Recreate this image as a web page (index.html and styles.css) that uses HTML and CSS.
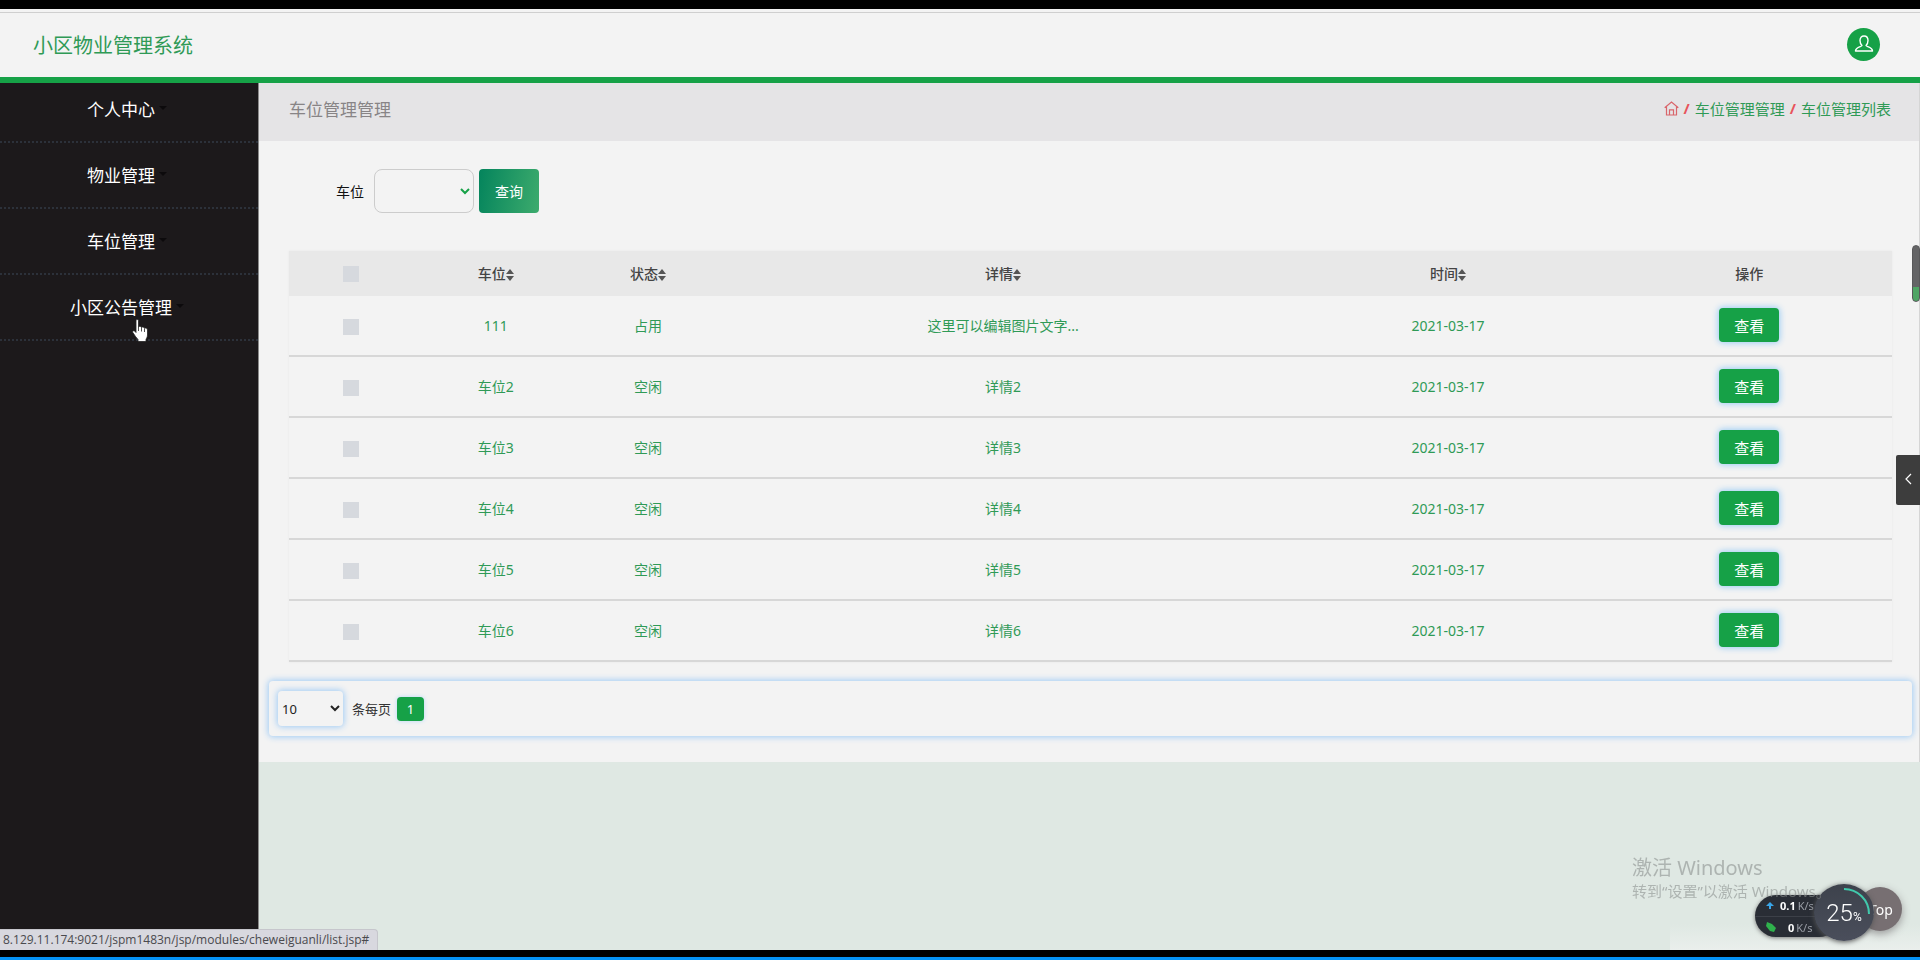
FILE: index.html
```html
<!DOCTYPE html>
<html lang="zh-CN">

<head>
    <meta charset="UTF-8" />
    <meta name="viewport" content="width=device-width, initial-scale=1.0" />
    <title>小区物业管理系统</title>
    <link rel="stylesheet" href="styles.css">
</head>

<body>
    <header class="header">
        <a class="brand" href="#">小区物业管理系统</a>
        <button class="avatar" aria-label="个人中心">
            <svg width="20" height="20" viewBox="0 0 20 20" fill="none" stroke="#fff" stroke-width="1.4" stroke-linejoin="round">
                <path d="M8 11.5C6.600 10.200 6 8.500 6 6.500C6 3.500 7.500 2 10 2C12.500 2 14 3.500 14 6.500C14 8.500 13.400 10.200 12 11.500C12 12.600 18.500 13 18.500 17H1.500C1.500 13 8 12.600 8 11.500Z" />
            </svg>
        </button>
    </header>

    <div class="wrapper">
        <nav class="sidebar">
            <a class="menu-item" href="#">个人中心<span class="caret"></span></a>
            <a class="menu-item" href="#">物业管理<span class="caret"></span></a>
            <a class="menu-item" href="#">车位管理<span class="caret"></span></a>
            <a class="menu-item" href="#">小区公告管理<span class="caret"></span></a>
        </nav>

        <main class="content">
            <div class="breadcrumb-bar">
                <h1 class="page-title">车位管理管理</h1>
                <div class="breadcrumb">
                    <a class="home" href="#" aria-label="首页">
                        <svg width="15" height="15" viewBox="0 0 15 15" fill="none" stroke="#d9656b" stroke-width="1.2">
                            <path d="M.7 6.800L7.500 1L14.300 6.800M2.500 5.500V14H12.500V5.500M5.500 14V8.800H9.500V14" />
                        </svg>
                    </a>
                    <span class="slash">/</span>
                    <a href="#">车位管理管理</a>
                    <span class="slash">/</span>
                    <a href="#">车位管理列表</a>
                </div>
            </div>

            <form class="search">
                <label for="chewei">车位</label>
                <select class="search-select" id="chewei">
                    <option></option>
                </select>
                <button class="search-button" type="button">查询</button>
            </form>

            <table class="list">
                <colgroup>
                    <col class="col-check">
                    <col class="col-name">
                    <col class="col-status">
                    <col class="col-detail">
                    <col class="col-date">
                    <col class="col-action">
                </colgroup>
                <thead>
                    <tr>
                        <th><input class="check" type="checkbox" aria-label="全选"></th>
                        <th>车位<span class="sort"></span></th>
                        <th>状态<span class="sort"></span></th>
                        <th>详情<span class="sort"></span></th>
                        <th>时间<span class="sort"></span></th>
                        <th>操作</th>
                    </tr>
                </thead>
                <tbody>
                    <tr>
                        <td><input class="check" type="checkbox" aria-label="111"></td>
                        <td>111</td>
                        <td>占用</td>
                        <td>这里可以编辑图片文字...</td>
                        <td>2021-03-17</td>
                        <td><button class="view">查看</button></td>
                    </tr>
                    <tr>
                        <td><input class="check" type="checkbox" aria-label="车位2"></td>
                        <td>车位2</td>
                        <td>空闲</td>
                        <td>详情2</td>
                        <td>2021-03-17</td>
                        <td><button class="view">查看</button></td>
                    </tr>
                    <tr>
                        <td><input class="check" type="checkbox" aria-label="车位3"></td>
                        <td>车位3</td>
                        <td>空闲</td>
                        <td>详情3</td>
                        <td>2021-03-17</td>
                        <td><button class="view">查看</button></td>
                    </tr>
                    <tr>
                        <td><input class="check" type="checkbox" aria-label="车位4"></td>
                        <td>车位4</td>
                        <td>空闲</td>
                        <td>详情4</td>
                        <td>2021-03-17</td>
                        <td><button class="view">查看</button></td>
                    </tr>
                    <tr>
                        <td><input class="check" type="checkbox" aria-label="车位5"></td>
                        <td>车位5</td>
                        <td>空闲</td>
                        <td>详情5</td>
                        <td>2021-03-17</td>
                        <td><button class="view">查看</button></td>
                    </tr>
                    <tr>
                        <td><input class="check" type="checkbox" aria-label="车位6"></td>
                        <td>车位6</td>
                        <td>空闲</td>
                        <td>详情6</td>
                        <td>2021-03-17</td>
                        <td><button class="view">查看</button></td>
                    </tr>
                </tbody>
            </table>

            <div class="pager">
                <select class="page-size" id="page-size">
                    <option>10</option>
                </select>
                <label for="page-size">条每页</label>
                <button class="page-number">1</button>
            </div>
        </main>
    </div>

    <!-- things floating over the page -->
    <svg class="cursor" width="18" height="24" viewBox="0 0 18 24">
        <path d="M4 1.500C4 .3 6.500 .3 6.500 1.500V8C7 7 9.200 7.200 9.500 8.500C10.200 7.600 12.200 8 12.500 9.300C13.500 8.600 15.500 9.200 15.500 11V16C15.500 18 14.500 19 14 20.500V22.500H6V20.500C4 18.500 2.500 16 .8 13.500C0 12 1.800 11 3 12.200L4 13.500Z" fill="#fff" stroke="#222" stroke-width=".8" />
        <path d="M6.500 8V12M9.500 8.500V12.500M12.500 9.500V13" stroke="#222" stroke-width=".8" />
    </svg>

    <div class="scroll-thumb"></div>
    <button class="drawer" aria-label="展开">
        <svg width="8" height="12" viewBox="0 0 8 12" fill="none" stroke="#fff" stroke-width="1.2">
            <path d="M7 1L2 6L7 11" />
        </svg>
    </button>

    <div class="floor"></div>

    <button class="to-top">Top</button>
    <div class="speed">
        <div class="speed-row">
            <svg width="8" height="8" viewBox="0 0 8 8"><path d="M4 0L8 4H5V7H3V4H0Z" fill="#39a5e8" /></svg>
            <b>0.1</b><span>K/s</span>
        </div>
        <div class="speed-row">
            <svg width="10" height="10" viewBox="0 0 10 10"><path d="M1 0L6 2L10 6L8 10L4 9L0 4Z" fill="#2fb14c" /></svg>
            <b>0</b><span>K/s</span>
        </div>
    </div>
    <div class="usage">
        <svg class="usage-ring" width="60" height="58" viewBox="0 0 60 58" fill="none">
            <path d="M30 5A25 25 0 0 1 55 30" stroke="#41c9ac" stroke-width="2" />
        </svg>
        <span class="usage-value">25</span><span>%</span>
    </div>

    <div class="watermark">
        <div class="watermark-title">激活 Windows</div>
        <div>转到“设置”以激活 Windows。</div>
    </div>

    <div class="status-url">8.129.11.174:9021/jspm1483n/jsp/modules/cheweiguanli/list.jsp#</div>
    <div class="taskbar"></div>
</body>

</html>
```
FILE: styles.css
```css
* {
    box-sizing: border-box;
}

body {
    margin: 0;
    min-height: 100vh;
    display: flex;
    flex-direction: column;
    border-top: 9px solid #000;
    background-color: #dfe8e3;
    font-family: "Noto Sans", "Noto Sans CJK SC", sans-serif;
    font-size: 14px;
    color: #333;
}

a {
    text-decoration: none;
}

button,
select {
    font-family: inherit;
    cursor: pointer;
}

.header {
    height: 74px;
    display: flex;
    justify-content: space-between;
    align-items: center;
    padding: 2px 40px 0 33px;
    background: linear-gradient(#f3f3f3 3px, #cfcfcf 3px, #cfcfcf 4px, #f3f3f3 4px);
    border-bottom: 6px solid #16a147;
}

.brand {
    font-size: 20px;
    color: #2f9a56;
}

.avatar {
    width: 33px;
    height: 33px;
    display: flex;
    justify-content: center;
    align-items: center;
    padding: 0;
    border: 0;
    border-radius: 50%;
    background-color: #16a147;
}

.wrapper {
    flex: 1;
    display: flex;
    align-items: stretch;
}

.sidebar {
    width: 259px;
    flex-shrink: 0;
    background-color: #1c191b;
    border-right: 1px solid #8a8a8a;
}

.menu-item {
    height: 66px;
    display: flex;
    justify-content: center;
    align-items: center;
    gap: 4px;
    padding: 0 4px 2px 0;
    border-bottom: 2px dotted #2c313a;
    font-size: 17px;
    color: #fff;
}

.menu-item:first-child {
    height: 60px;
    padding-bottom: 8px;
}

.caret {
    border: 4px solid transparent;
    border-top-color: #0c0a0c;
    border-bottom: 0;
}

.content {
    flex: 1;
    align-self: flex-start;
    padding-bottom: 26px;
    background-color: #f3f3f3;
    border-right: 1px solid #d5d5d5;
}

.breadcrumb-bar {
    height: 58px;
    display: flex;
    justify-content: space-between;
    align-items: center;
    padding: 0 28px 8px 30px;
    background-color: #e5e4e6;
}

.page-title {
    margin: 0;
    font-size: 17px;
    font-weight: normal;
    color: #888486;
}

.breadcrumb {
    display: flex;
    align-items: center;
    gap: 5px;
    font-size: 15px;
}

.breadcrumb a {
    color: #2f9a56;
}

.home {
    display: flex;
}

.slash {
    font-weight: bold;
    color: #e8535c;
}

.search {
    display: flex;
    align-items: center;
    padding: 28px 0 38px 77px;
    color: #111;
}

.search-select {
    width: 100px;
    height: 44px;
    margin: 0 5px 0 10px;
    padding: 0 4px;
    border: 1px solid #ccc;
    border-radius: 8px;
    background-color: #f3f3f3;
    color: #16a147;
}

.search-button {
    width: 60px;
    height: 44px;
    border: 0;
    border-radius: 4px;
    background: linear-gradient(100deg, #04845c, #3dab6d);
    color: #fff;
    font-size: 14px;
}

.list {
    width: calc(100% - 57px);
    margin-left: 30px;
    table-layout: fixed;
    border-collapse: separate;
    border-spacing: 0;
    text-align: center;
    box-shadow: 0 0 2px #e6e6e6;
}

.col-check {
    width: 7.7%;
}

.col-name {
    width: 10.4%;
}

.col-status {
    width: 8.6%;
}

.col-detail {
    width: 35.7%;
}

.col-date {
    width: 19.8%;
}

.col-action {
    width: 17.8%;
}

.list th {
    height: 45px;
    padding: 0 0 2px;
    background-color: #e8e8e8;
    font-weight: 500;
    color: #444;
}

.list td {
    height: 61px;
    padding: 0 0 1px;
    border-bottom: 2px solid #d7d7d7;
    color: #2f9a56;
}

.check {
    appearance: none;
    width: 16px;
    height: 16px;
    margin: 0;
    background-color: #d6d9de;
    vertical-align: middle;
}

.sort {
    display: inline-flex;
    flex-direction: column;
    gap: 2px;
    vertical-align: middle;
}

.sort::before,
.sort::after {
    content: "";
    border: 4px solid transparent;
}

.sort::before {
    border-top: 0;
    border-bottom: 5px solid #555;
}

.sort::after {
    border-bottom: 0;
    border-top: 5px solid #555;
}

.view {
    width: 60px;
    height: 34px;
    border: 0;
    border-radius: 4px;
    background-color: #16a147;
    box-shadow: 0 0 6px 1px #9ccdf5;
    color: #fff;
    font-size: 15px;
    vertical-align: middle;
}

.pager {
    height: 55px;
    display: flex;
    align-items: center;
    margin: 19px 7px 0 10px;
    padding: 0 9px;
    border-radius: 4px;
    box-shadow: 0 0 6px 1px #9fcbf5;
    font-size: 13px;
}

.page-size {
    width: 65px;
    height: 35px;
    margin-right: 9px;
    border: 0;
    border-radius: 4px;
    background-color: #f3f3f3;
    box-shadow: 0 0 6px 1px #9fcbf5;
    color: #222;
    font-size: 13px;
}

.page-number {
    width: 27px;
    height: 24px;
    margin-left: 6px;
    padding: 0;
    border: 0;
    border-radius: 4px;
    background-color: #16a147;
    box-shadow: 0 0 4px #b5d7f8;
    color: #fff;
    font-size: 13px;
}

.cursor {
    position: absolute;
    left: 132px;
    top: 319px;
}

.scroll-thumb {
    position: fixed;
    right: 0;
    top: 245px;
    width: 8px;
    height: 57px;
    border: 1px solid #58585a;
    border-radius: 4px;
    background: linear-gradient(#646466 41px, #4fa565 41px);
}

.drawer {
    position: fixed;
    right: 0;
    top: 455px;
    width: 24px;
    height: 50px;
    padding: 0;
    border: 0;
    border-radius: 2px 0 0 2px;
    background-color: #3d3d3d;
}

.floor {
    position: fixed;
    right: 0;
    bottom: 10px;
    width: 250px;
    height: 26px;
    background: linear-gradient(#dfe8e3, #eaefec);
}

.watermark {
    position: fixed;
    right: 90px;
    bottom: 58px;
    width: 198px;
    font-size: 15px;
    line-height: 22px;
    white-space: nowrap;
    color: rgba(140, 145, 143, 0.6);
    pointer-events: none;
}

.watermark-title {
    font-size: 20px;
    line-height: 24px;
}

.to-top {
    position: fixed;
    right: 18px;
    bottom: 29px;
    width: 44px;
    height: 44px;
    padding: 0 0 0 2px;
    border: 0;
    border-radius: 50%;
    background-color: #776f72;
    box-shadow: 0 3px 8px #999;
    color: #fff;
    font-size: 14px;
}

.speed {
    position: fixed;
    right: 80px;
    bottom: 23px;
    width: 85px;
    height: 42px;
    border-radius: 21px;
    background-color: #292d35;
    box-shadow: 0 1px 4px #777;
    color: #fff;
    font-size: 11px;
}

.speed-row {
    height: 21px;
    display: flex;
    align-items: center;
    gap: 2px;
    padding-left: 11px;
}

.speed-row + .speed-row {
    border-top: 1px solid #3c4048;
}

.speed-row b {
    margin-left: 4px;
}

.speed-row + .speed-row b {
    margin-left: 10px;
}

.speed-row span {
    color: #9a9ea6;
}

.usage {
    position: fixed;
    right: 46px;
    bottom: 19px;
    width: 60px;
    height: 57px;
    display: flex;
    justify-content: center;
    align-items: baseline;
    border-radius: 50%;
    background: linear-gradient(#3d424c, #4a4e5b);
    box-shadow: 0 1px 5px #555;
    color: #fff;
    font-family: Roboto, sans-serif;
    font-size: 12px;
    line-height: 58px;
}

.usage-ring {
    position: absolute;
    left: 0;
    top: 0;
}

.usage-value {
    font-size: 24px;
    font-weight: 300;
}

.status-url {
    position: fixed;
    left: 0;
    bottom: 10px;
    height: 21px;
    padding: 0 8px 0 3px;
    border: 1px solid #c6c6cc;
    border-left: 0;
    border-bottom: 0;
    border-radius: 0 4px 0 0;
    background-color: #d8d8df;
    color: #4a4a4e;
    font-family: "Open Sans", sans-serif;
    font-size: 12px;
    line-height: 20px;
}

.taskbar {
    position: fixed;
    left: 0;
    right: 0;
    bottom: 0;
    height: 10px;
    background-color: #0492f5;
    border-top: 7px solid #000;
}
```
